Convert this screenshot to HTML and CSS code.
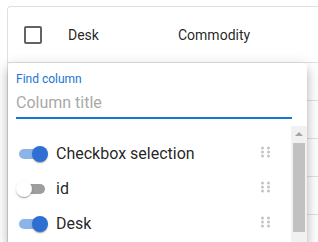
FILE: index.html
```html
<!doctype html>
<html lang="en">
<head>
    <meta charset="UTF-8">
    <title>Columns</title>
    <link rel="stylesheet" href="styles.css">
</head>
<body>
    <div class="grid">
        <div class="header">
            <div class="cell check"><span class="box"></span></div>
            <div class="cell desk">Desk</div>
            <div class="cell">Commodity</div>
        </div>
        <div class="row"></div>
        <div class="row"></div>
        <div class="row"></div>
        <div class="row"></div>
    </div>

    <div class="panel">
        <div class="panelHead">
            <label class="label">Find column</label>
            <div class="input">
                <input type="text" placeholder="Column title">
            </div>
        </div>
        <div class="panelBody">
            <div class="list">
                <div class="item">
                    <span class="switch on"><span class="track"></span><span class="thumb"></span></span>
                    <span class="name">Checkbox selection</span>
                    <svg class="drag" width="12" height="12" viewBox="0 0 12 12"><circle cx="2.5" cy="2" r="1.5"/><circle cx="8.5" cy="2" r="1.5"/><circle cx="2.5" cy="6" r="1.5"/><circle cx="8.5" cy="6" r="1.5"/><circle cx="2.5" cy="10" r="1.5"/><circle cx="8.5" cy="10" r="1.5"/></svg>
                </div>
                <div class="item">
                    <span class="switch"><span class="track"></span><span class="thumb"></span></span>
                    <span class="name">id</span>
                    <svg class="drag" width="12" height="12" viewBox="0 0 12 12"><circle cx="2.5" cy="2" r="1.5"/><circle cx="8.5" cy="2" r="1.5"/><circle cx="2.5" cy="6" r="1.5"/><circle cx="8.5" cy="6" r="1.5"/><circle cx="2.5" cy="10" r="1.5"/><circle cx="8.5" cy="10" r="1.5"/></svg>
                </div>
                <div class="item">
                    <span class="switch on"><span class="track"></span><span class="thumb"></span></span>
                    <span class="name">Desk</span>
                    <svg class="drag" width="12" height="12" viewBox="0 0 12 12"><circle cx="2.5" cy="2" r="1.5"/><circle cx="8.5" cy="2" r="1.5"/><circle cx="2.5" cy="6" r="1.5"/><circle cx="8.5" cy="6" r="1.5"/><circle cx="2.5" cy="10" r="1.5"/><circle cx="8.5" cy="10" r="1.5"/></svg>
                </div>
            </div>
            <div class="scrollbar">
                <div class="arrow"></div>
                <div class="scrollThumb"></div>
            </div>
        </div>
    </div>
</body>
</html>
```
FILE: styles.css
```css
html, body{
    margin: 0;
    height: 100%;
    overflow: hidden;
    background-color: #fff;
    font-family: Roboto, "Liberation Sans", sans-serif;
    color: rgba(0,0,0,0.87);
}
.grid{
    margin: 6px 0 0 7px;
    height: calc(100vh - 7px);
    border: 1px solid #e0e0e0;
    border-right: 0;
    border-bottom: 0;
    border-radius: 4px 0 0 0;
}
.header{
    display: flex;
    align-items: center;
    height: 55px;
    border-bottom: 1px solid #e0e0e0;
    font-size: 14px;
}
.cell{
    padding: 0 10px;
}
.check{
    width: 50px;
    padding: 0;
    display: flex;
    justify-content: center;
}
.box{
    width: 14px;
    height: 14px;
    border: 2px solid #636363;
    border-radius: 2px;
}
.desk{
    width: 90px;
}
.row{
    height: 37px;
    border-bottom: 1px solid #e0e0e0;
}

/* columns popup */
.panel{
    position: absolute;
    left: 8px;
    top: 63px;
    width: 299px;
    height: calc(100vh - 63px);
    background-color: #fff;
    border-radius: 4px 4px 0 0;
    box-shadow: 0 5px 5px -3px rgba(0,0,0,0.2), 0 8px 10px 1px rgba(0,0,0,0.14), 0 3px 14px 2px rgba(0,0,0,0.12);
    display: flex;
    flex-direction: column;
}
.panelHead{
    padding: 8px;
    display: flex;
    flex-direction: column;
}
.label{
    font-size: 12px;
    line-height: 17px;
    color: #1976d2;
    height: 14px;
}
.input{
    margin-right: 7px;
    padding: 6px 0 3px;
    border-bottom: 2px solid #1976d2;
    height: 23px;
}
.input input{
    border: 0;
    outline: none;
    padding: 0;
    width: 100%;
    height: 23px;
    font-family: inherit;
    font-size: 16px;
    color: rgba(0,0,0,0.87);
}
.input input::placeholder{
    color: #a9a9a9;
    opacity: 1;
}
.panelBody{
    flex: 1;
    display: flex;
}
.list{
    flex: 1;
    padding-top: 9px;
}
.item{
    display: flex;
    align-items: center;
    height: 35px;
    padding-left: 4px;
}
.switch{
    position: relative;
    width: 40px;
    height: 24px;
    flex-shrink: 0;
}
.track{
    position: absolute;
    left: 7px;
    top: 7px;
    width: 26px;
    height: 10px;
    border-radius: 5px;
    background-color: #9e9e9e;
}
.thumb{
    position: absolute;
    left: 4px;
    top: 4px;
    width: 16px;
    height: 16px;
    border-radius: 50%;
    background-color: #fff;
    box-shadow: 0 2px 1px -1px rgba(0,0,0,0.2), 0 1px 1px 0 rgba(0,0,0,0.14), 0 1px 3px 0 rgba(0,0,0,0.12);
}
.on .track{
    background-color: #8cb4e9;
}
.on .thumb{
    left: 20px;
    background-color: #2e6fd4;
}
.name{
    margin-left: 4px;
    font-size: 16px;
}
.drag{
    margin-left: auto;
    margin-right: 19px;
    margin-top: -3px;
    fill: #c4c4c4;
}
.scrollbar{
    width: 16px;
    margin-top: -1px;
    background-color: #f1f1f1;
    display: flex;
    flex-direction: column;
    align-items: center;
}
.arrow{
    margin-top: 6px;
    width: 0;
    height: 0;
    border-left: 4px solid transparent;
    border-right: 4px solid transparent;
    border-bottom: 4px solid #a3a3a3;
}
.scrollThumb{
    margin-top: 7px;
    width: 12px;
    height: 89px;
    background-color: #c1c1c1;
}
```
